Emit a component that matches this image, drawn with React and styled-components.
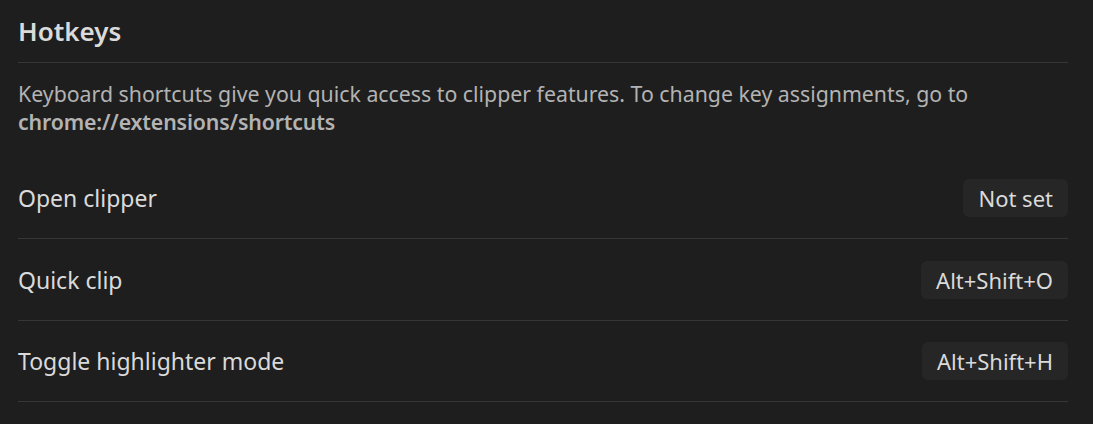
import React from "react";
import styled, { createGlobalStyle } from "styled-components";

const GlobalStyle = createGlobalStyle`
  body {
    margin: 0;
    background-color: #1e1e1e;
    font-family: "Noto Sans", "Open Sans", sans-serif;
  }
`;

const Page = styled.div`
  display: flex;
  flex-direction: column;
  padding: 0 25px 0 18px;
  color: #dadada;
`;

const Heading = styled.div`
  display: flex;
  align-items: center;
  height: 62px;
  border-bottom: 1px solid #363636;
  font-size: 26px;
  font-weight: 600;
  color: #dadada;
`;

const Description = styled.div`
  padding: 17px 0 21px;
  font-size: 21.3px;
  line-height: 28px;
  color: #b3b3b3;

  strong {
    font-weight: 600;
    letter-spacing: -0.15px;
  }
`;

const Row = styled.div`
  display: flex;
  align-items: center;
  justify-content: space-between;
  height: 81px;
  border-bottom: 1px solid #363636;

  &:last-child {
    height: 80px;
  }
`;

const Label = styled.div`
  font-size: 23px;
  color: #dadada;
`;

const Key = styled.div`
  display: flex;
  align-items: center;
  height: 38px;
  padding: 0 15px;
  border-radius: 6px;
  background-color: #262626;
  font-size: 22px;
  color: #dadada;
`;

const hotkeys = [
  { name: "Open clipper", keys: "Not set" },
  { name: "Quick clip", keys: "Alt+Shift+O" },
  { name: "Toggle highlighter mode", keys: "Alt+Shift+H" },
];

function App() {
  return (
    <Page>
      <GlobalStyle />
      <Heading>Hotkeys</Heading>
      <Description>
        Keyboard shortcuts give you quick access to clipper features. To change
        key assignments, go to <strong>chrome://extensions/shortcuts</strong>
      </Description>
      {hotkeys.map(h => (
        <Row key={h.name}>
          <Label>{h.name}</Label>
          <Key>{h.keys}</Key>
        </Row>
      ))}
    </Page>
  );
}

export default App;
